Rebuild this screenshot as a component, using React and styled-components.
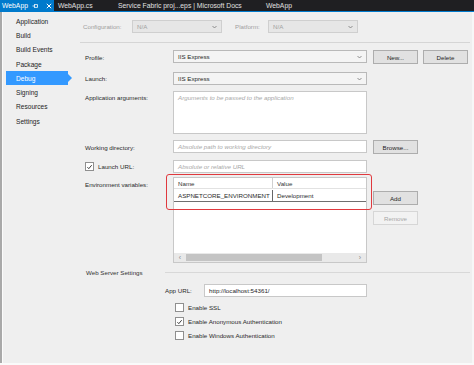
import React from 'react'
import styled, { createGlobalStyle } from 'styled-components'

const GlobalStyle = createGlobalStyle`
  html, body { margin: 0; padding: 0; background: #efefef; }
  body {
    font-family: "Liberation Sans", Arial, sans-serif;
    font-size: 6.2px;
    color: #2a2a2a;
  }
`

const tabs = [
  { title: 'WebApp', width: 54, active: true },
  { title: 'WebApp.cs', width: 58 },
  { title: 'Service Fabric proj...eps | Microsoft Docs', width: 146 },
  { title: 'WebApp', width: 60 },
]

const pages = ['Application', 'Build', 'Build Events', 'Package', 'Debug', 'Signing', 'Resources', 'Settings']

const App = () => (
  <Window>
    <GlobalStyle />
    <TabBar>
      {tabs.map((tab, index) => (
        <Tab key={index} active={tab.active} w={tab.width}>
          <span>{tab.title}</span>
          {tab.active && (
            <TabIcons>
              <svg width="6" height="6" viewBox="0 0 6 6">
                <path d="M0.5 3h2M2.5 1.2v3.6M2.5 1.6h3v2.8h-3" stroke="#fff" strokeWidth="0.8" fill="none" />
              </svg>
              <svg width="6" height="6" viewBox="0 0 6 6">
                <path d="M0.8 0.8l4.4 4.4M5.2 0.8L0.8 5.2" stroke="#fff" strokeWidth="1" />
              </svg>
            </TabIcons>
          )}
        </Tab>
      ))}
    </TabBar>
    <Body>
      <LeftStrip />
      <Sidebar>
        {pages.map(page => (
          <NavItem key={page} active={page === 'Debug'}>{page}</NavItem>
        ))}
      </Sidebar>
      <Content>
        <ConfigRow>
          <ConfigLabel w={49}>Configuration:</ConfigLabel>
          <Select disabled w={90}>N/A<Chevron /></Select>
          <ConfigLabel w={33} style={{ marginLeft: 13 }}>Platform:</ConfigLabel>
          <Select disabled w={90}>N/A<Chevron /></Select>
        </ConfigRow>
        <Separator top={9} />

        <FormRow top={7}>
          <Label>Profile:</Label>
          <Select>IIS Express<Chevron /></Select>
          <ButtonGroup>
            <Button>New...</Button>
            <Button>Delete</Button>
          </ButtonGroup>
        </FormRow>

        <FormRow top={8}>
          <Label>Launch:</Label>
          <Select>IIS Express<Chevron /></Select>
        </FormRow>

        <FormRow top={6}>
          <Label align="start">Application arguments:</Label>
          <TextArea>Arguments to be passed to the application</TextArea>
        </FormRow>

        <FormRow top={6}>
          <Label>Working directory:</Label>
          <Input placeholder>Absolute path to working directory</Input>
          <ButtonGroup>
            <Button>Browse...</Button>
          </ButtonGroup>
        </FormRow>

        <FormRow top={6}>
          <Label>
            <CheckLine>
              <CheckBox checked />
              Launch URL:
            </CheckLine>
          </Label>
          <Input placeholder>Absolute or relative URL</Input>
        </FormRow>

        <FormRow top={4}>
          <Label align="start" pad={4}>Environment variables:</Label>
          <ListWrap>
            <ListBox>
              <ListHeader>
                <Cell w={99}>Name</Cell>
                <Cell>Value</Cell>
              </ListHeader>
              <ListRow>
                <Cell w={99} divider>ASPNETCORE_ENVIRONMENT</Cell>
                <Cell>Development</Cell>
              </ListRow>
              <Spacer />
              <ScrollBar>
                <ScrollArrow>‹</ScrollArrow>
                <Track>
                  <Thumb />
                </Track>
                <ScrollArrow>›</ScrollArrow>
              </ScrollBar>
            </ListBox>
            <Highlight />
          </ListWrap>
          <ButtonStack>
            <Button>Add</Button>
            <Button disabled>Remove</Button>
          </ButtonStack>
        </FormRow>

        <SectionRow>
          <SectionTitle>Web Server Settings</SectionTitle>
          <SectionLine />
        </SectionRow>

        <ServerBlock>
          <UrlRow>
            <UrlLabel>App URL:</UrlLabel>
            <Input w={163}>http://localhost:54361/</Input>
          </UrlRow>
          <CheckList>
            <CheckLine><CheckBox />Enable SSL</CheckLine>
            <CheckLine><CheckBox checked />Enable Anonymous Authentication</CheckLine>
            <CheckLine><CheckBox />Enable Windows Authentication</CheckLine>
          </CheckList>
        </ServerBlock>
      </Content>
    </Body>
  </Window>
)

const Chevron = () => (
  <ChevronMark width="5" height="4" viewBox="0 0 5 4">
    <path d="M0.5 1l2 2 2-2" stroke="#777" strokeWidth="0.8" fill="none" />
  </ChevronMark>
)

const CheckBox = ({ checked }) => (
  <Box>
    {checked && (
      <svg width="8" height="8" viewBox="0 0 8 8">
        <path d="M1.6 4.2l1.6 1.7 3.3-4" stroke="#222" strokeWidth="1" fill="none" />
      </svg>
    )}
  </Box>
)

const Window = styled.div`
  width: 474px;
  height: 365px;
  display: flex;
  flex-direction: column;
  overflow: hidden;
  background: #efefef;
`

const TabBar = styled.div`
  height: 11px;
  flex: none;
  display: flex;
  gap: 2px;
  background: #1f1f22;
  border-bottom: 1px solid #007acc;
  color: #e8e8e8;
  font-size: 6.8px;
`

const Tab = styled.div`
  width: ${({ w }) => w}px;
  flex: none;
  padding-left: 2px;
  display: flex;
  align-items: center;
  gap: 4px;
  white-space: nowrap;
  overflow: hidden;
  background: ${({ active }) => active ? '#007acc' : 'transparent'};
  color: ${({ active }) => active ? '#fff' : '#e0e0e0'};
  box-sizing: border-box;
`

const TabIcons = styled.span`
  display: flex;
  flex: none;
  gap: 8px;
`

const Body = styled.div`
  flex: 1;
  display: flex;
  border-bottom: 2px solid #fafafa;
`

const LeftStrip = styled.div`
  width: 2px;
  background: #a9a9a9;
  border-right: 1px solid #fbfbfb;
`

const Sidebar = styled.div`
  width: 77px;
  padding-top: 2px;
  font-size: 6.6px;
`

const NavItem = styled.div`
  position: relative;
  height: 14.3px;
  display: flex;
  align-items: center;
  margin-left: 3px;
  padding-left: 10px;
  width: 52px;
  color: ${({ active }) => active ? '#fff' : '#1e1e1e'};
  background: ${({ active }) => active ? '#3399ff' : 'transparent'};

  ${({ active }) => active && `
    &::after {
      content: '';
      position: absolute;
      right: -4px;
      top: 50%;
      margin-top: -4px;
      border-left: 4px solid #3399ff;
      border-top: 4px solid transparent;
      border-bottom: 4px solid transparent;
    }
  `}
`

const Content = styled.div`
  flex: 1;
  padding-top: 8px;
  border-right: 2px solid #f7f7f7;
`

const ConfigRow = styled.div`
  display: flex;
  align-items: center;
  padding-left: 3px;
`

const ConfigLabel = styled.span`
  width: ${({ w }) => w}px;
  color: #a0a0a0;
`

const Separator = styled.div`
  margin-top: ${({ top }) => top}px;
  height: 1px;
  background: #d5d5d5;
  margin-right: 2px;
`

const FormRow = styled.div`
  display: grid;
  grid-template-columns: 82px 194px 95px;
  column-gap: 6px;
  margin-top: ${({ top }) => top}px;
  padding-left: 5px;
`

const Label = styled.div`
  display: flex;
  align-items: ${({ align }) => align || 'center'};
  padding-top: ${({ pad, align }) => pad || (align ? 3 : 0)}px;
`

const fieldBase = `
  box-sizing: border-box;
  border: 1px solid #b9b9b9;
  display: flex;
  align-items: center;
  padding: 0 4px;
  white-space: nowrap;
  overflow: hidden;
`

const Select = styled.div`
  ${fieldBase}
  position: relative;
  height: 13px;
  width: ${({ w }) => w ? `${w}px` : 'auto'};
  background: ${({ disabled }) => disabled ? '#e6e6e6' : '#f4f4f4'};
  color: ${({ disabled }) => disabled ? '#a2a2a2' : '#1e1e1e'};
  border-color: ${({ disabled }) => disabled ? '#cfcfcf' : '#b9b9b9'};
`

const ChevronMark = styled.svg`
  position: absolute;
  right: 4px;
  top: 4px;
`

const Input = styled.div`
  ${fieldBase}
  height: 13px;
  width: ${({ w }) => w ? `${w}px` : 'auto'};
  background: #fff;
  border-color: #c8c8c8;
  color: ${({ placeholder }) => placeholder ? '#a8a8a8' : '#1e1e1e'};
  font-style: ${({ placeholder }) => placeholder ? 'italic' : 'normal'};
`

const TextArea = styled.div`
  ${fieldBase}
  height: 43px;
  align-items: flex-start;
  padding-top: 2px;
  background: #fff;
  border-color: #c8c8c8;
  color: #a8a8a8;
  font-style: italic;
`

const ButtonGroup = styled.div`
  display: flex;
  gap: 5px;
`

const ButtonStack = styled.div`
  display: flex;
  flex-direction: column;
  gap: 6px;
  padding-top: 14px;
`

const Button = styled.div`
  box-sizing: border-box;
  width: 45px;
  height: 14px;
  display: flex;
  align-items: center;
  justify-content: center;
  background: ${({ disabled }) => disabled ? '#f2f2f2' : '#e1e1e1'};
  border: 1px solid ${({ disabled }) => disabled ? '#d6d6d6' : '#adadad'};
  color: ${({ disabled }) => disabled ? '#a6a6a6' : '#1e1e1e'};
`

const CheckLine = styled.div`
  display: flex;
  align-items: center;
  gap: 4px;
  white-space: nowrap;
`

const Box = styled.span`
  box-sizing: border-box;
  width: 9px;
  height: 9px;
  display: flex;
  align-items: center;
  justify-content: center;
  border: 1px solid #8f8f8f;
  background: #fff;
`

const ListWrap = styled.div`
  position: relative;
`

const ListBox = styled.div`
  box-sizing: border-box;
  height: 86px;
  display: flex;
  flex-direction: column;
  background: #fff;
  border: 1px solid #c8c8c8;
`

const ListHeader = styled.div`
  height: 10px;
  display: flex;
  align-items: center;
  border-bottom: 1px solid #e2e2e2;
  color: #333;
`

const ListRow = styled.div`
  height: 11px;
  margin-top: 1px;
  display: flex;
  align-items: center;
  border-bottom: 1px solid #6f6f6f;
`

const Cell = styled.div`
  box-sizing: border-box;
  width: ${({ w }) => w ? `${w}px` : 'auto'};
  height: 100%;
  display: flex;
  align-items: center;
  padding-left: 4px;
  white-space: nowrap;
  border-right: ${({ w }) => w ? '1px solid #d0d0d0' : 'none'};
  ${({ divider }) => divider && 'border-right-color: #666;'}
`

const Spacer = styled.div`
  flex: 1;
`

const ScrollBar = styled.div`
  height: 9px;
  display: flex;
  align-items: center;
  background: #e9e9e9;
`

const ScrollArrow = styled.span`
  width: 12px;
  text-align: center;
  color: #8a8a8a;
  font-size: 7px;
`

const Track = styled.div`
  flex: 1;
  height: 100%;
  display: flex;
  align-items: center;
`

const Thumb = styled.div`
  width: 136px;
  height: 7px;
  background: #c4c4c4;
`

const Highlight = styled.div`
  position: absolute;
  left: -7px;
  right: -5px;
  top: -3px;
  height: 34px;
  border: 1.5px solid #e0393e;
  border-radius: 3px;
  pointer-events: none;
`

const SectionRow = styled.div`
  display: flex;
  align-items: center;
  margin-top: 6px;
  padding-left: 6px;
`

const SectionTitle = styled.span`
  width: 79px;
  color: #333;
`

const SectionLine = styled.div`
  flex: 1;
  height: 1px;
  background: #d8d8d8;
  margin-right: 2px;
`

const ServerBlock = styled.div`
  padding-left: 85px;
  margin-top: 8px;
`

const UrlRow = styled.div`
  display: flex;
  align-items: center;
`

const UrlLabel = styled.span`
  width: 39px;
`

const CheckList = styled.div`
  display: flex;
  flex-direction: column;
  gap: 5px;
  margin-top: 6px;
  padding-left: 10px;
`

export default App
